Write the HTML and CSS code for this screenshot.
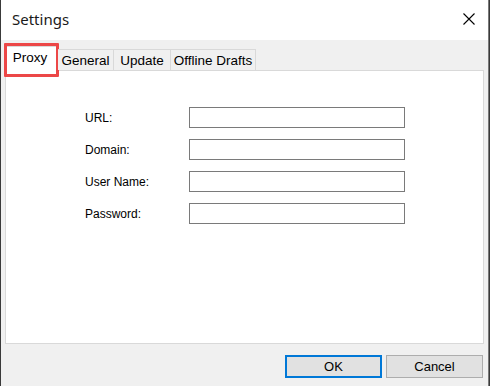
FILE: index.html
```html
<!DOCTYPE html>
<html>
<head>
<meta charset="utf-8">
<link rel="stylesheet" href="styles.css">
</head>
<body>
<div class="window">
  <div class="titlebar">
    <span class="title">Settings</span>
    <svg class="close" width="12" height="12" viewBox="0 0 12 12"><path d="M0.5 0.5 L11.5 11.5 M11.5 0.5 L0.5 11.5" stroke="#000" stroke-width="1.1" fill="none"/></svg>
  </div>
  <div class="client">
    <div class="tabs">
      <div class="tab selected">Proxy<span class="highlight"></span></div>
      <div class="tab t-general">General</div>
      <div class="tab t-update">Update</div>
      <div class="tab t-offline">Offline Drafts</div>
    </div>
    <div class="panel">
      <div class="form">
        <label class="lbl">URL:</label><div class="field"></div>
        <label class="lbl">Domain:</label><div class="field"></div>
        <label class="lbl">User Name:</label><div class="field"></div>
        <label class="lbl">Password:</label><div class="field"></div>
      </div>
    </div>
    <div class="footer">
      <button class="btn ok">OK</button>
      <button class="btn">Cancel</button>
    </div>
  </div>
</div>
</body>
</html>
```
FILE: styles.css
```css
html, body {
  margin: 0;
  padding: 0;
  background: #3a3a3a;
}
body {
  width: 490px;
  height: 386px;
  overflow: hidden;
  font-family: "Noto Sans", "Liberation Sans", sans-serif;
}
.window {
  width: 487px;
  height: 386px;
  margin-left: 1px;
  border-right: 1px solid #7a7a7a;
  display: flex;
  flex-direction: column;
  background: #f0f0f0;
}
.titlebar {
  height: 40px;
  background: #fff;
  display: flex;
  align-items: center;
  justify-content: space-between;
  padding: 0 13px 0 11px;
  box-sizing: border-box;
}
.title {
  font-size: 15px;
  color: #1a1a1a;
  position: relative;
  top: -1px;
}
.close {
  display: block;
  position: relative;
  top: -1px;
}
.client {
  flex: 1;
  display: flex;
  flex-direction: column;
  padding: 6px 4px 0 4px;
}
.tabs {
  display: flex;
  align-items: flex-end;
  height: 24px;
  padding-left: 1px;
  position: relative;
  z-index: 2;
}
.tab {
  height: 21px;
  box-sizing: border-box;
  border: 1px solid #d9d9d9;
  border-bottom: none;
  border-left: none;
  background: #f0f0f0;
  font-family: "Liberation Sans", Arial, sans-serif;
  font-size: 13.5px;
  line-height: 21px;
  text-align: center;
  color: #000;
  position: relative;
}
.tab.selected {
  height: 25px;
  width: 52px;
  border-left: 1px solid #d9d9d9;
  background: #fff;
  line-height: 22px;
  margin-bottom: -1px;
  padding-right: 4px;
}
.t-general { width: 56px; }
.t-update { width: 57px; }
.t-offline { width: 85px; }
.highlight {
  position: absolute;
  left: -3px;
  top: -4px;
  width: 55px;
  height: 34px;
  border: 3px solid #ec4747;
  box-sizing: border-box;
  border-radius: 1px;
}
.panel {
  height: 274px;
  background: #fff;
  border: 1px solid #d9d9d9;
  box-sizing: border-box;
  padding: 36px 0 0 79px;
}
.form {
  display: grid;
  grid-template-columns: 104px 216px;
  row-gap: 11px;
  align-items: center;
}
.lbl {
  font-family: "Liberation Sans", Arial, sans-serif;
  font-size: 12px;
  color: #000;
}
.field {
  height: 21px;
  border: 1px solid #7a7a7a;
  box-sizing: border-box;
  background: #fff;
}
.footer {
  display: flex;
  justify-content: flex-end;
  gap: 4px;
  padding: 11px 1px 0 0;
}
.btn {
  width: 97px;
  height: 23px;
  box-sizing: border-box;
  border: 1px solid #adadad;
  background: #e1e1e1;
  font-family: "Liberation Sans", Arial, sans-serif;
  font-size: 13px;
  color: #000;
  padding: 0;
  margin: 0;
}
.btn.ok {
  border: 2px solid #0078d7;
}
```
